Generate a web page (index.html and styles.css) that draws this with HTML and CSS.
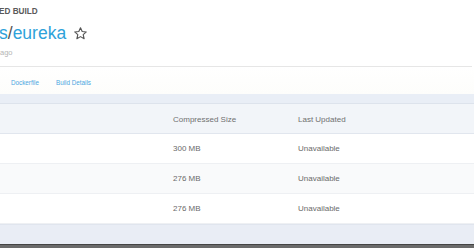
FILE: index.html
```html
<!DOCTYPE html>
<html>
<head>
<meta charset="utf-8">
<link rel="stylesheet" href="styles.css">
</head>
<body>
<div class="page">
  <header class="repo-head">
    <div class="kind">ED BUILD</div>
    <div class="title-row">
      <h1 class="title"><span class="blue">s</span><span class="slash">/</span><span class="blue">eureka</span></h1>
      <svg class="star" width="15" height="15" viewBox="0 0 24 24"><path d="M12 2.8l2.7 6.1 6.6.6-5 4.4 1.5 6.5L12 17l-5.8 3.4 1.5-6.5-5-4.4 6.6-.6z" fill="none" stroke="#555" stroke-width="1.8" stroke-linejoin="round"/></svg>
    </div>
    <div class="ago">ago</div>
  </header>
  <nav class="tabs">
    <span class="tab">Dockerfile</span>
    <span class="tab">Build Details</span>
  </nav>
  <div class="band"></div>
  <div class="table">
    <div class="row head">
      <span class="c1"></span><span class="c2">Compressed Size</span><span class="c3">Last Updated</span>
    </div>
    <div class="row">
      <span class="c1"></span><span class="c2">300 MB</span><span class="c3">Unavailable</span>
    </div>
    <div class="row alt">
      <span class="c1"></span><span class="c2">276 MB</span><span class="c3">Unavailable</span>
    </div>
    <div class="row">
      <span class="c1"></span><span class="c2">276 MB</span><span class="c3">Unavailable</span>
    </div>
  </div>
  <div class="foot-band"></div>
  <div class="bottom-bar"></div>
</div>
</body>
</html>
```
FILE: styles.css
```css
html, body {
  margin: 0;
  padding: 0;
  background: #ffffff;
  font-family: "Liberation Sans", Arial, sans-serif;
}
.page {
  width: 474px;
  height: 248px;
  overflow: hidden;
  display: flex;
  flex-direction: column;
}
.page > * { flex-shrink: 0; box-sizing: border-box; }
.repo-head {
  height: 67px;
  padding-top: 7px;
  border-bottom: 1px solid #e6e6e6;
  margin-right: 2px;
}
.kind {
  font-size: 8.2px;
  font-weight: bold;
  color: #5a5a5a;
  line-height: 9px;
  margin-left: -1px;
}
.title-row {
  display: flex;
  align-items: center;
  gap: 7px;
  margin-top: 6px;
  height: 22px;
}
.title {
  margin: 0;
  font-size: 17.5px;
  font-weight: normal;
  line-height: 22px;
  margin-left: -1px;
}
.blue { color: #2ea2da; }
.slash { color: #555; }
.star { display: block; margin-top: 0; }
.ago {
  font-size: 7.5px;
  color: #b5b5b5;
  margin-top: 5px;
  line-height: 8px;
}
.tabs {
  height: 27px;
  display: flex;
  align-items: center;
  gap: 17px;
  padding-left: 11px;
  padding-top: 3px;
  background: linear-gradient(#ffffff, #fdfdfb);
}
.tab {
  font-size: 6.3px;
  color: #4ca6df;
}
.band {
  height: 10px;
  background: #e9eef6;
  border-bottom: 1px solid #dde3ec;
}
.table {
  display: flex;
  flex-direction: column;
}
.row {
  height: 30px;
  display: flex;
  align-items: center;
  font-size: 8px;
  color: #6a6a6a;
  border-bottom: 1px solid #eef0f3;
  box-sizing: border-box;
}
.row.head {
  background: #f2f5f9;
  border-bottom: 1px solid #e1e6ee;
  color: #707070;
  padding-top: 2px;
}
.row.alt { background: #f9fafb; }
.c1 { width: 173px; }
.c2 { width: 125px; }
.c3 { flex: 1; }
.foot-band {
  height: 20px;
  background: #e9edf5;
  border-top: 1px solid #e0e5ee;
}
.bottom-bar {
  height: 4px;
  background: #6b6b6b;
  border-top: 1px solid #444;
}
```
